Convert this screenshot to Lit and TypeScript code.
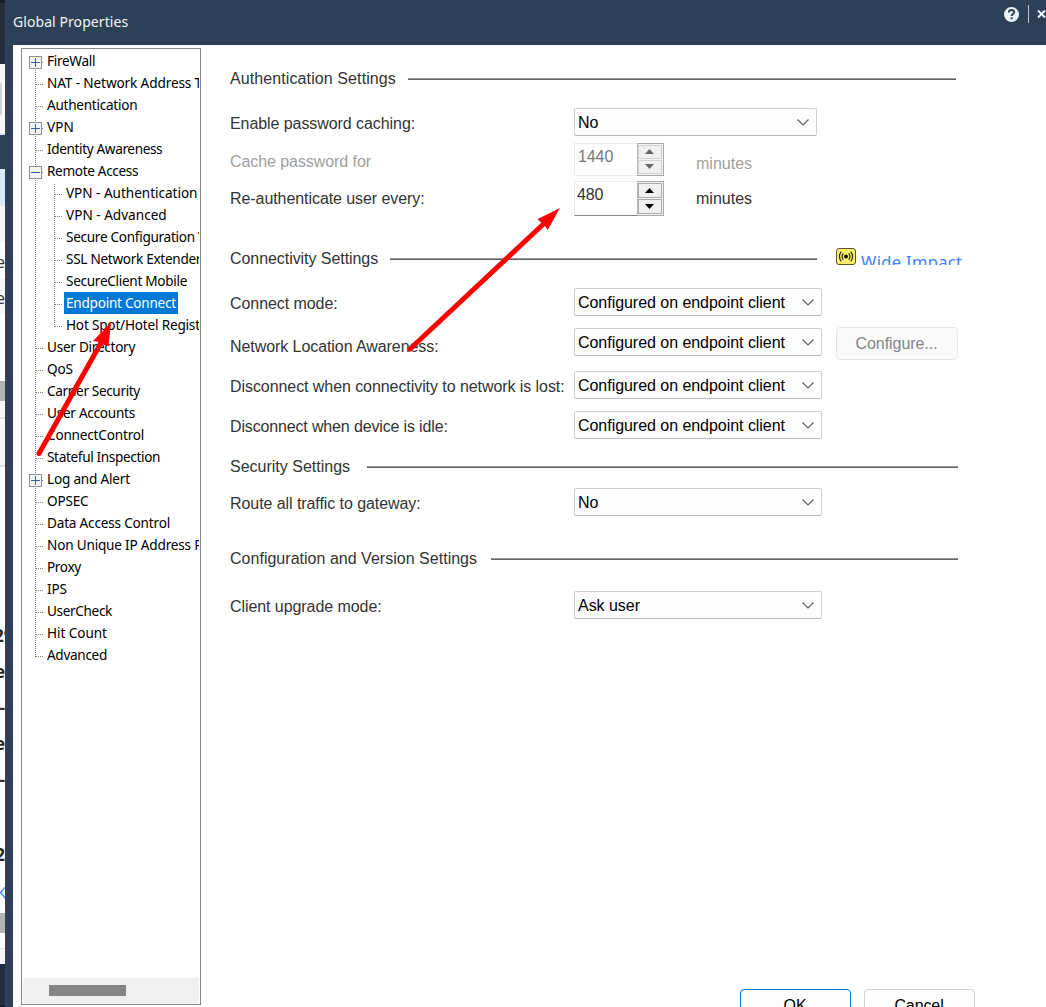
import { LitElement, html, css, svg, nothing } from "lit";
import { customElement } from "lit/decorators.js";
import { classMap } from "lit/directives/class-map.js";

type Node = { t: string; ls?: number; box?: "plus" | "minus"; kids?: Node[]; sel?: boolean };

// ls is the tracking of one caption, in px.
const TREE: Node[] = [
  { t: "FireWall", box: "plus", ls: -0.3 },
  { t: "NAT - Network Address Translation", ls: -0.12 },
  { t: "Authentication", ls: -0.27 },
  { t: "VPN", box: "plus", ls: 0 },
  { t: "Identity Awareness", ls: -0.37 },
  {
    t: "Remote Access",
    box: "minus",
    ls: -0.34,
    kids: [
      { t: "VPN - Authentication", ls: -0.04 },
      { t: "VPN - Advanced", ls: 0 },
      { t: "Secure Configuration Verification", ls: -0.3 },
      { t: "SSL Network Extender", ls: -0.3 },
      { t: "SecureClient Mobile", ls: -0.3 },
      { t: "Endpoint Connect", sel: true, ls: -0.25 },
      { t: "Hot Spot/Hotel Registration" },
    ],
  },
  { t: "User Directory", ls: -0.27 },
  { t: "QoS" },
  { t: "Carrier Security", ls: -0.37 },
  { t: "User Accounts", ls: -0.27 },
  { t: "ConnectControl" },
  { t: "Stateful Inspection", ls: -0.35 },
  { t: "Log and Alert", box: "plus" },
  { t: "OPSEC" },
  { t: "Data Access Control" },
  { t: "Non Unique IP Address Ranges" },
  { t: "Proxy", ls: -0.35 },
  { t: "IPS" },
  { t: "UserCheck", ls: -0.35 },
  { t: "Hit Count", ls: -0.07 },
  { t: "Advanced", ls: -0.32 },
];

// Bands of the window behind the dialog: height, tint class, visible glyph.
const BANDS: [number, string, string?][] = [
  [3, "ink"], [61, "navy"], [19, "pale"], [32, "field"], [18, "pale"], [2, "rule"], [34, "slate"],
  [37, "sky"], [37, "mist"], [36, "white", "e"], [36, "mist", "e"], [66, "white"], [20, "grey"],
  [16, "pale"], [2, "rule"], [46, "pale"], [2, "rule"], [150, "white"],
  [36, "white bold cut", "29"], [36, "white bold", "e"], [36, "white bold", "-"], [36, "white bold", "e"],
  [36, "white bold", "-"], [38, "white"], [38, "white bold", "2"], [38, "white link", "K"], [2, "white"],
  [20, "grey"], [15, "white"], [1, "rule"], [15, "pale"], [41, "navy"], [2, "ink"],
];

@customElement("tree-view")
export class TreeView extends LitElement {
  static styles = css`
    :host { display: flex; flex-direction: column; box-sizing: border-box; width: 180px; height: 957px;
      border: 1px solid #83868f; background: #fff; overflow: hidden; padding: 2px 1px 1px; }
    .list { flex: 1; overflow: hidden; font: 13.6px/22px "Noto Sans", "Open Sans", sans-serif; color: #000; }
    .row { display: flex; height: 22px; white-space: nowrap; }
    .rail { flex: none; width: 19px; height: 22px; }
    .guide { flex: none; width: 22px; height: 22px; }
    .label { height: 22px; line-height: 21px; padding: 0 2px; margin-top: -1px; min-width: 0; overflow: hidden; }
    .sel { background: #0078d7; color: #fff; }
    .bar { flex: none; height: 25px; background: #f0f0f0; display: flex; align-items: center; padding-left: 26px; }
    .thumb { width: 77px; height: 11px; background: #858585; }
    svg { display: block; }
  `;
  private guide(n: Node, first: boolean, last: boolean) {
    return html`<svg class="guide" viewBox="0 0 22 22" shape-rendering="crispEdges">
      <path d="M12.5 ${first ? 11 : 1}V${last ? 12 : 22}M13 11.5H21" stroke="#808080" stroke-dasharray="1 1" fill="none" />
      ${n.box
        ? svg`<rect x="6.5" y="5.5" width="12" height="12" fill="#f3f3f3" stroke="#919191"/>
          <path d="M8 11.5H17${n.box === "plus" ? "M12.5 7V16" : ""}" stroke="#3f5aa0"/>`
        : nothing}
    </svg>`;
  }
  private row(n: Node, depth: number, first: boolean, last: boolean) {
    return html`<div class="row">
      ${depth ? html`<svg class="rail" viewBox="0 0 19 22" shape-rendering="crispEdges"><path d="M12.5 1V22" stroke="#808080" stroke-dasharray="1 1" /></svg>` : nothing}
      ${this.guide(n, first, last)}<span class=${classMap({ label: true, sel: !!n.sel })} style="letter-spacing:${n.ls ?? -0.2}px">${n.t}</span>
    </div>`;
  }
  render() {
    return html`<div class="list">
        ${TREE.map((n, i) => [
          this.row(n, 0, i === 0, i === TREE.length - 1),
          (n.kids ?? []).map((k, j) => this.row(k, 1, false, j === n.kids!.length - 1)),
        ])}
      </div>
      <div class="bar"><div class="thumb"></div></div>`;
  }
}

@customElement("app-root")
export class AppRoot extends LitElement {
  static styles = css`
    :host { display: block; width: 1046px; height: 1007px; overflow: hidden; position: relative; background: #fff; }
    .page { display: flex; height: 1007px; }
    .strip { flex: none; width: 5px; overflow: hidden; }
    .band { display: flex; justify-content: flex-end; align-items: center; overflow: hidden; color: #333;
      font: 17px "Open Sans", sans-serif; box-sizing: border-box; }
    .ink { background: #151d29; } .navy { background: #222e40; } .pale { background: #f7f7f7; }
    .field { background: #f3f3f5; border: solid #d3d4da; border-width: 1px 2px 1px 0; margin-right: 3px; }
    .rule { background: #dfe3e8; } .slate { background: #2e4058; } .sky { background: #dbeaf7; }
    .mist { background: #f4f6f8; } .white { background: #fff; } .grey { background: #b0b4b6; }
    .bold { font-weight: 700; color: #262626; }
    .cut { justify-content: flex-start; text-indent: -6px; }
    .link { color: #2f8cf0; justify-content: flex-start; text-indent: -4px; }
    .dialog { flex: 1; display: flex; flex-direction: column; background: #2e4058; min-width: 0; }
    .title { flex: none; height: 45px; display: flex; align-items: flex-start; color: #f2f5f9; padding-left: 8px;
      font: 14px/20px "Noto Sans", sans-serif; }
    .caption { flex: 1; padding-top: 12px; letter-spacing: 0.07px; }
    .tools { flex: none; margin-top: 4px; }
    .body { flex: 1; margin-left: 8px; background: #fff; display: flex; padding: 3px 0 0 8px; min-height: 0; }
    .form { flex: 1; display: flex; flex-direction: column; margin: -3px 0 0 29px; color: #333;
      font: 16px/20px "Liberation Sans", Arial, sans-serif; white-space: nowrap; }
    .head { display: flex; box-sizing: border-box; }
    .line { flex: none; height: 2px; margin-top: 10px; background: linear-gradient(#999 50%, #666 50%); }
    .head1 { height: 63px; padding-top: 23px; gap: 12px; } .head1 .line { width: 548px; }
    .head2 { height: 40px; gap: 12px; } .head2 .line { width: 427px; }
    .head3 { height: 32px; gap: 17px; } .head3 .line { width: 591px; }
    .head4 { height: 43px; gap: 14px; } .head4 .line { width: 467px; }
    .headtext { flex: none; padding-top: 1px; }
    .w1 { width: 166px; letter-spacing: 0.1px; } .w2 { width: 148px; letter-spacing: -0.06px; }
    .w3 { width: 120px; } .w4 { width: 247px; letter-spacing: 0.02px; }
    .impact { display: flex; height: 17px; overflow: hidden; margin-left: 7px; gap: 5px; }
    .wide { color: #3b82f6; font: 16.5px/20px "Noto Sans", sans-serif; padding-top: 4px; letter-spacing: 0.33px; }
    .row { display: flex; align-items: flex-start; box-sizing: border-box; }
    .h35 { height: 35px; } .h38 { height: 38px; } .h67 { height: 67px; } .h40 { height: 40px; }
    .h43 { height: 43px; } .h45 { height: 45px; } .h60 { height: 60px; } .h28 { height: 28px; }
    .label { flex: none; width: 344px; padding-top: 6px; letter-spacing: -0.07px; }
    .tight { letter-spacing: -0.15px; }
    .drop7 { padding-top: 8px; } .drop8 { padding-top: 9px; }
    .off { color: #a0a0a0; }
    .select { flex: none; box-sizing: border-box; width: 248px; height: 28px; border: 1px solid #cfcfcf; border-bottom-color: #b8b8b8;
      border-radius: 2px; background: #fdfdfd; color: #000; display: flex; justify-content: space-between;
      padding: 4px 6px 0 3px; letter-spacing: -0.04px; }
    .narrow { width: 243px; }
    .chev { margin-top: 5px; }
    .spin { flex: none; box-sizing: border-box; width: 90px; height: 33px; display: flex; border: 1px solid #ececec; border-right: 0; }
    .live { height: 35px; border-bottom-color: #858585; }
    .num { flex: 1; padding: 3px 0 0 3px; color: #777; letter-spacing: -0.1px; }
    .live .num { padding-left: 2px; color: #333; }
    .steps { flex: none; width: 27px; margin: -1px 0; box-sizing: border-box; border: 1px solid #a8a8a8; border-left: 1px solid #bbb; background: #f4f4f4;
      display: flex; flex-direction: column; gap: 1px; padding: 1px 1px 1px 0; }
    .step { flex: 1; border: 1px solid #d2d2d2; background: #f0f0f0; display: flex; align-items: center; justify-content: center; color: #666;
      padding: 0 2px 1px 0; }
    .live .step { border-color: #aaa; color: #000; }
    .unit { margin-left: 32px; padding-top: 11px; }
    .unit7 { padding-top: 8px; }
    .configure { box-sizing: border-box; width: 122px; height: 33px; margin: -1px 0 0 14px; border: 1px solid #e6e6e6; border-radius: 4px;
      background: #f9f9f9; color: #858585; text-align: center; line-height: 31px; padding-right: 1px; letter-spacing: -0.05px; }
    .footer { margin-top: auto; height: 18px; overflow: hidden; display: flex; gap: 13px; padding-left: 510px; }
    .btn { box-sizing: border-box; width: 111px; height: 33px; border: 1px solid #d0d0d0; border-radius: 4px; background: #fdfdfd;
      color: #000; text-align: center; line-height: 31px; padding-right: 1px; letter-spacing: -0.1px; }
    .ok { border-color: #0078d4; }
    .arrows { position: absolute; left: 0; top: 0; pointer-events: none; }
    svg { display: block; flex: none; }
  `;
  private select(value: string, narrow = false) {
    return html`<div class=${classMap({ select: true, narrow })}>
      <span>${value}</span>
      <svg class="chev" width="14" height="10" viewBox="0 0 14 10"><path d="M1.5 1.5L7 7L12.500 1.500" fill="none" stroke="#606060" stroke-width="1.2" /></svg>
    </div>`;
  }
  private spinner(value: string, live: boolean) {
    const tri = (d: string) => html`<span class="step"><svg width="9" height="5" viewBox="0 0 9 5"><path d=${d} fill="currentColor" /></svg></span>`;
    return html`<div class=${classMap({ spin: true, live })}>
      <span class="num">${value}</span>
      <span class="steps">${tri("M0 5L4.500 0L9 5Z")}${tri("M0 0L4.500 5L9 0Z")}</span>
    </div>`;
  }
  private head(n: number, text: string, extra: unknown = nothing) {
    return html`<div class="head head${n}"><span class="headtext w${n}">${text}</span><i class="line"></i>${extra}</div>`;
  }
  render() {
    const ep = "Configured on endpoint client";
    return html`<div class="page">
        <div class="strip">
          ${BANDS.map(([h, c, t]) => html`<div class="band ${c}" style="height:${h}px">${t ?? nothing}</div>`)}
        </div>
        <div class="dialog">
          <div class="title">
            <span class="caption">Global Properties</span>
            <svg class="tools" width="43" height="22" viewBox="0 0 43 22">
              <circle cx="8.500" cy="10.500" r="7.500" fill="#eaf3ff" />
              <path d="M5.900 8.400C5.900 5.300 11.200 5.300 11.200 8.200C11.200 10 8.600 10 8.600 12" fill="none" stroke="#2e4058" stroke-width="2" />
              <rect x="7.600" y="13.300" width="2" height="2" fill="#2e4058" />
              <path d="M25.500 1V19" stroke="#b8c1cc" />
              <path d="M35 6.500L42 13.500M42 6.500L35 13.500" stroke="#eaf3ff" stroke-width="2" />
            </svg>
          </div>
          <div class="body">
            <tree-view></tree-view>
            <div class="form">
              ${this.head(1, "Authentication Settings")}
              <div class="row h35"><span class="label">Enable password caching:</span>${this.select("No", true)}</div>
              <div class="row h38"><span class="label drop8 off">Cache password for</span>${this.spinner("1440", false)}<span class="unit off">minutes</span></div>
              <div class="row h67"><span class="label drop7">Re-authenticate user every:</span>${this.spinner("480", true)}<span class="unit unit7">minutes</span></div>
              ${this.head(2, "Connectivity Settings", html`<div class="impact">
                <svg width="20" height="17" viewBox="0 0 20 17">
                  <rect x="0.500" y="0.500" width="19" height="16" rx="2.500" fill="#fff06a" stroke="#5c5626" />
                  <circle cx="10" cy="8.500" r="2" fill="#111" />
                  <path d="M7.200 5.300Q5 8.500 7.200 11.700M12.800 5.300Q15 8.500 12.800 11.700M5.200 3.700Q1.700 8.500 5.200 13.300M14.800 3.700Q18.300 8.500 14.800 13.300" fill="none" stroke="#222" stroke-width="1.200" />
                </svg>
                <span class="wide">Wide Impact</span>
              </div>`)}
              <div class="row h40"><span class="label">Connect mode:</span>${this.select(ep)}</div>
              <div class="row h43"><span class="label drop8">Network Location Awareness:</span>${this.select(ep)}<span class="configure">Configure...</span></div>
              <div class="row h40"><span class="label">Disconnect when connectivity to network is lost:</span>${this.select(ep)}</div>
              <div class="row h45"><span class="label tight">Disconnect when device is idle:</span>${this.select(ep)}</div>
              ${this.head(3, "Security Settings")}
              <div class="row h60"><span class="label">Route all traffic to gateway:</span>${this.select("No")}</div>
              ${this.head(4, "Configuration and Version Settings")}
              <div class="row h28"><span class="label">Client upgrade mode:</span>${this.select("Ask user")}</div>
              <div class="footer"><span class="btn ok">OK</span><span class="btn">Cancel</span></div>
            </div>
          </div>
        </div>
      </div>
      <svg class="arrows" width="1046" height="1007" viewBox="0 0 1046 1007" fill="#f00" stroke="#f00">
        <path d="M39 453.500L102 341M410 349L544 223.500" stroke-width="5" stroke-linecap="round" />
        <path stroke="none" d="M111 322.500L93 341L99 342L104 345L108.500 346ZM560 208L537.300 219.300L542 223L545 226L547.700 230Z" />
      </svg>`;
  }
}
